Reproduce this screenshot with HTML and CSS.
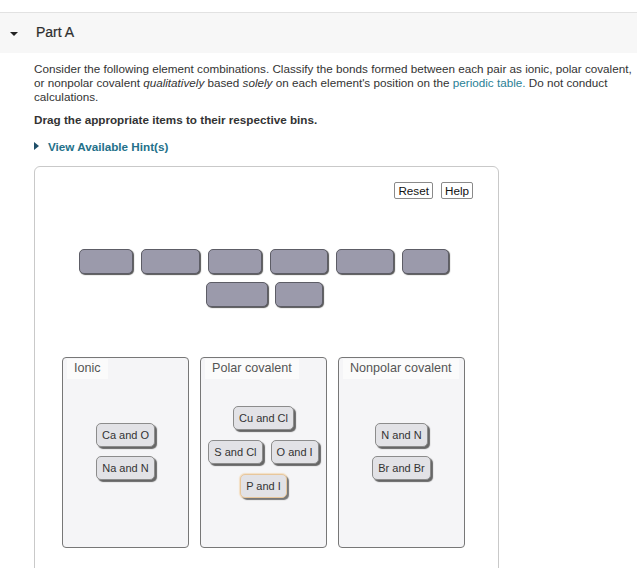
FILE: index.html
```html
<!DOCTYPE html>
<html>
<head>
<meta charset="utf-8">
<link rel="stylesheet" href="styles.css">
</head>
<body>
<div class="top-space"></div>
<div class="part-header">
  <span class="caret-down"></span>
  <span class="part-title">Part A</span>
</div>
<div class="part-body">
  <p class="intro">Consider the following element combinations. Classify the bonds formed between each pair as ionic, polar covalent, or nonpolar covalent <em>qualitatively</em> based <em>solely</em> on each element's position on the <a class="link">periodic table.</a> Do not conduct calculations.</p>
  <p class="instr">Drag the appropriate items to their respective bins.</p>
  <div class="hint"><span class="caret-right"></span><span class="hint-text">View Available Hint(s)</span></div>
  <div class="dnd">
    <div class="toolbar">
      <button class="btn">Reset</button>
      <button class="btn">Help</button>
    </div>
    <div class="slots">
      <div class="slot-row">
        <span class="slot" style="width:54px"></span>
        <span class="slot" style="width:59px"></span>
        <span class="slot" style="width:54px"></span>
        <span class="slot" style="width:58px"></span>
        <span class="slot" style="width:58px"></span>
        <span class="slot" style="width:47px"></span>
      </div>
      <div class="slot-row">
        <span class="slot" style="width:62px"></span>
        <span class="slot" style="width:48px"></span>
      </div>
    </div>
    <div class="bins">
      <div class="bin">
        <span class="bin-label">Ionic</span>
        <div class="items">
          <div class="item-row"><span class="item">Ca and O</span></div>
          <div class="item-row"><span class="item">Na and N</span></div>
        </div>
      </div>
      <div class="bin">
        <span class="bin-label">Polar covalent</span>
        <div class="items items-wide">
          <div class="item-row"><span class="item">Cu and Cl</span></div>
          <div class="item-row"><span class="item">S and Cl</span><span class="item">O and I</span></div>
          <div class="item-row"><span class="item focus">P and I</span></div>
        </div>
      </div>
      <div class="bin">
        <span class="bin-label">Nonpolar covalent</span>
        <div class="items">
          <div class="item-row"><span class="item">N and N</span></div>
          <div class="item-row"><span class="item">Br and Br</span></div>
        </div>
      </div>
    </div>
  </div>
</div>
</body>
</html>
```
FILE: styles.css
```css
html, body {
  margin: 0;
  padding: 0;
  background: #ffffff;
  font-family: "Liberation Sans", Arial, sans-serif;
  color: #333333;
  overflow: hidden;
}
.top-space {
  height: 12px;
  border-bottom: 1px solid #e2e2e2;
}
.part-header {
  height: 40px;
  background: #f7f7f7;
  display: flex;
  align-items: center;
}
.caret-down {
  width: 0;
  height: 0;
  margin-left: 10px;
  margin-top: 1px;
  border-left: 4px solid transparent;
  border-right: 4px solid transparent;
  border-top: 4px solid #222222;
}
.part-title {
  margin-left: 18px;
  font-size: 14px;
  color: #2e2e2e;
  margin-top: -2px;
  -webkit-text-stroke: 0.2px #2e2e2e;
}
.part-body {
  padding-left: 34px;
  padding-right: 3px;
}
.intro {
  margin: 9px 0 0 0;
  font-size: 11.7px;
  line-height: 14px;
  color: #333333;
}
.link {
  color: #2a7f96;
}
.instr {
  margin: 9px 0 0 0;
  font-size: 11.7px;
  line-height: 14px;
  font-weight: bold;
  color: #333333;
}
.hint {
  margin-top: 12px;
  display: flex;
  align-items: center;
  height: 14px;
}
.caret-right {
  width: 0;
  height: 0;
  border-top: 4px solid transparent;
  border-bottom: 4px solid transparent;
  border-left: 5px solid #1f4f69;
}
.hint-text {
  margin-left: 9px;
  font-size: 11.7px;
  font-weight: bold;
  color: #24718a;
}
.dnd {
  margin-top: 13px;
  width: 465px;
  height: 420px;
  border: 1px solid #c9c9c9;
  border-radius: 6px;
  box-sizing: border-box;
}
.toolbar {
  display: flex;
  justify-content: flex-end;
  gap: 8px;
  padding: 15px 25px 0 0;
}
.btn {
  font-family: "Liberation Sans", Arial, sans-serif;
  font-size: 11.7px;
  color: #111111;
  background: #ffffff;
  border: 1px solid #8a8a8a;
  border-radius: 2px;
  height: 17px;
  padding: 0 3px;
  line-height: 15px;
  margin: 0;
}
.slots {
  margin-top: 50px;
  display: flex;
  flex-direction: column;
  gap: 8px;
  padding-right: 5px;
}
.slot-row {
  display: flex;
  justify-content: center;
  gap: 8px;
}
.slot-row + .slot-row {
  gap: 7px;
}
.slot {
  display: block;
  box-sizing: border-box;
  height: 25px;
  background: #9b9aab;
  border: 1px solid #5d5d66;
  border-radius: 5px;
  box-shadow: 1px 1px 1px #555555;
}
.bins {
  margin-top: 50px;
  display: flex;
  justify-content: center;
  gap: 11px;
  padding-right: 6px;
}
.bin {
  position: relative;
  box-sizing: border-box;
  width: 127px;
  height: 191px;
  background: #f5f5f7;
  border: 1px solid #777777;
  border-radius: 4px;
  display: flex;
  flex-direction: column;
  justify-content: center;
}
.bin-label {
  position: absolute;
  left: 4px;
  top: 1px;
  padding: 2px 7px 3px 7px;
  background: #fbfbfb;
  font-size: 12.6px;
  line-height: 15px;
  color: #555555;
}
.items {
  display: flex;
  flex-direction: column;
  gap: 9px;
  margin-top: -2px;
}
.items-wide {
  gap: 10px;
}
.item-row {
  display: flex;
  justify-content: center;
  gap: 8px;
}
.item {
  display: block;
  height: 22px;
  line-height: 22px;
  padding: 0 5px;
  font-size: 11px;
  color: #333333;
  background: #e2e2e6;
  border: 1px solid #8c8c8c;
  border-radius: 5px;
  box-shadow: 2px 2px 1px #666666;
}
.item.focus {
  border-color: #e8c79c;
  box-shadow: 2px 2px 1px #777777, 0 0 1px 1px #f3dfc4;
}
```
